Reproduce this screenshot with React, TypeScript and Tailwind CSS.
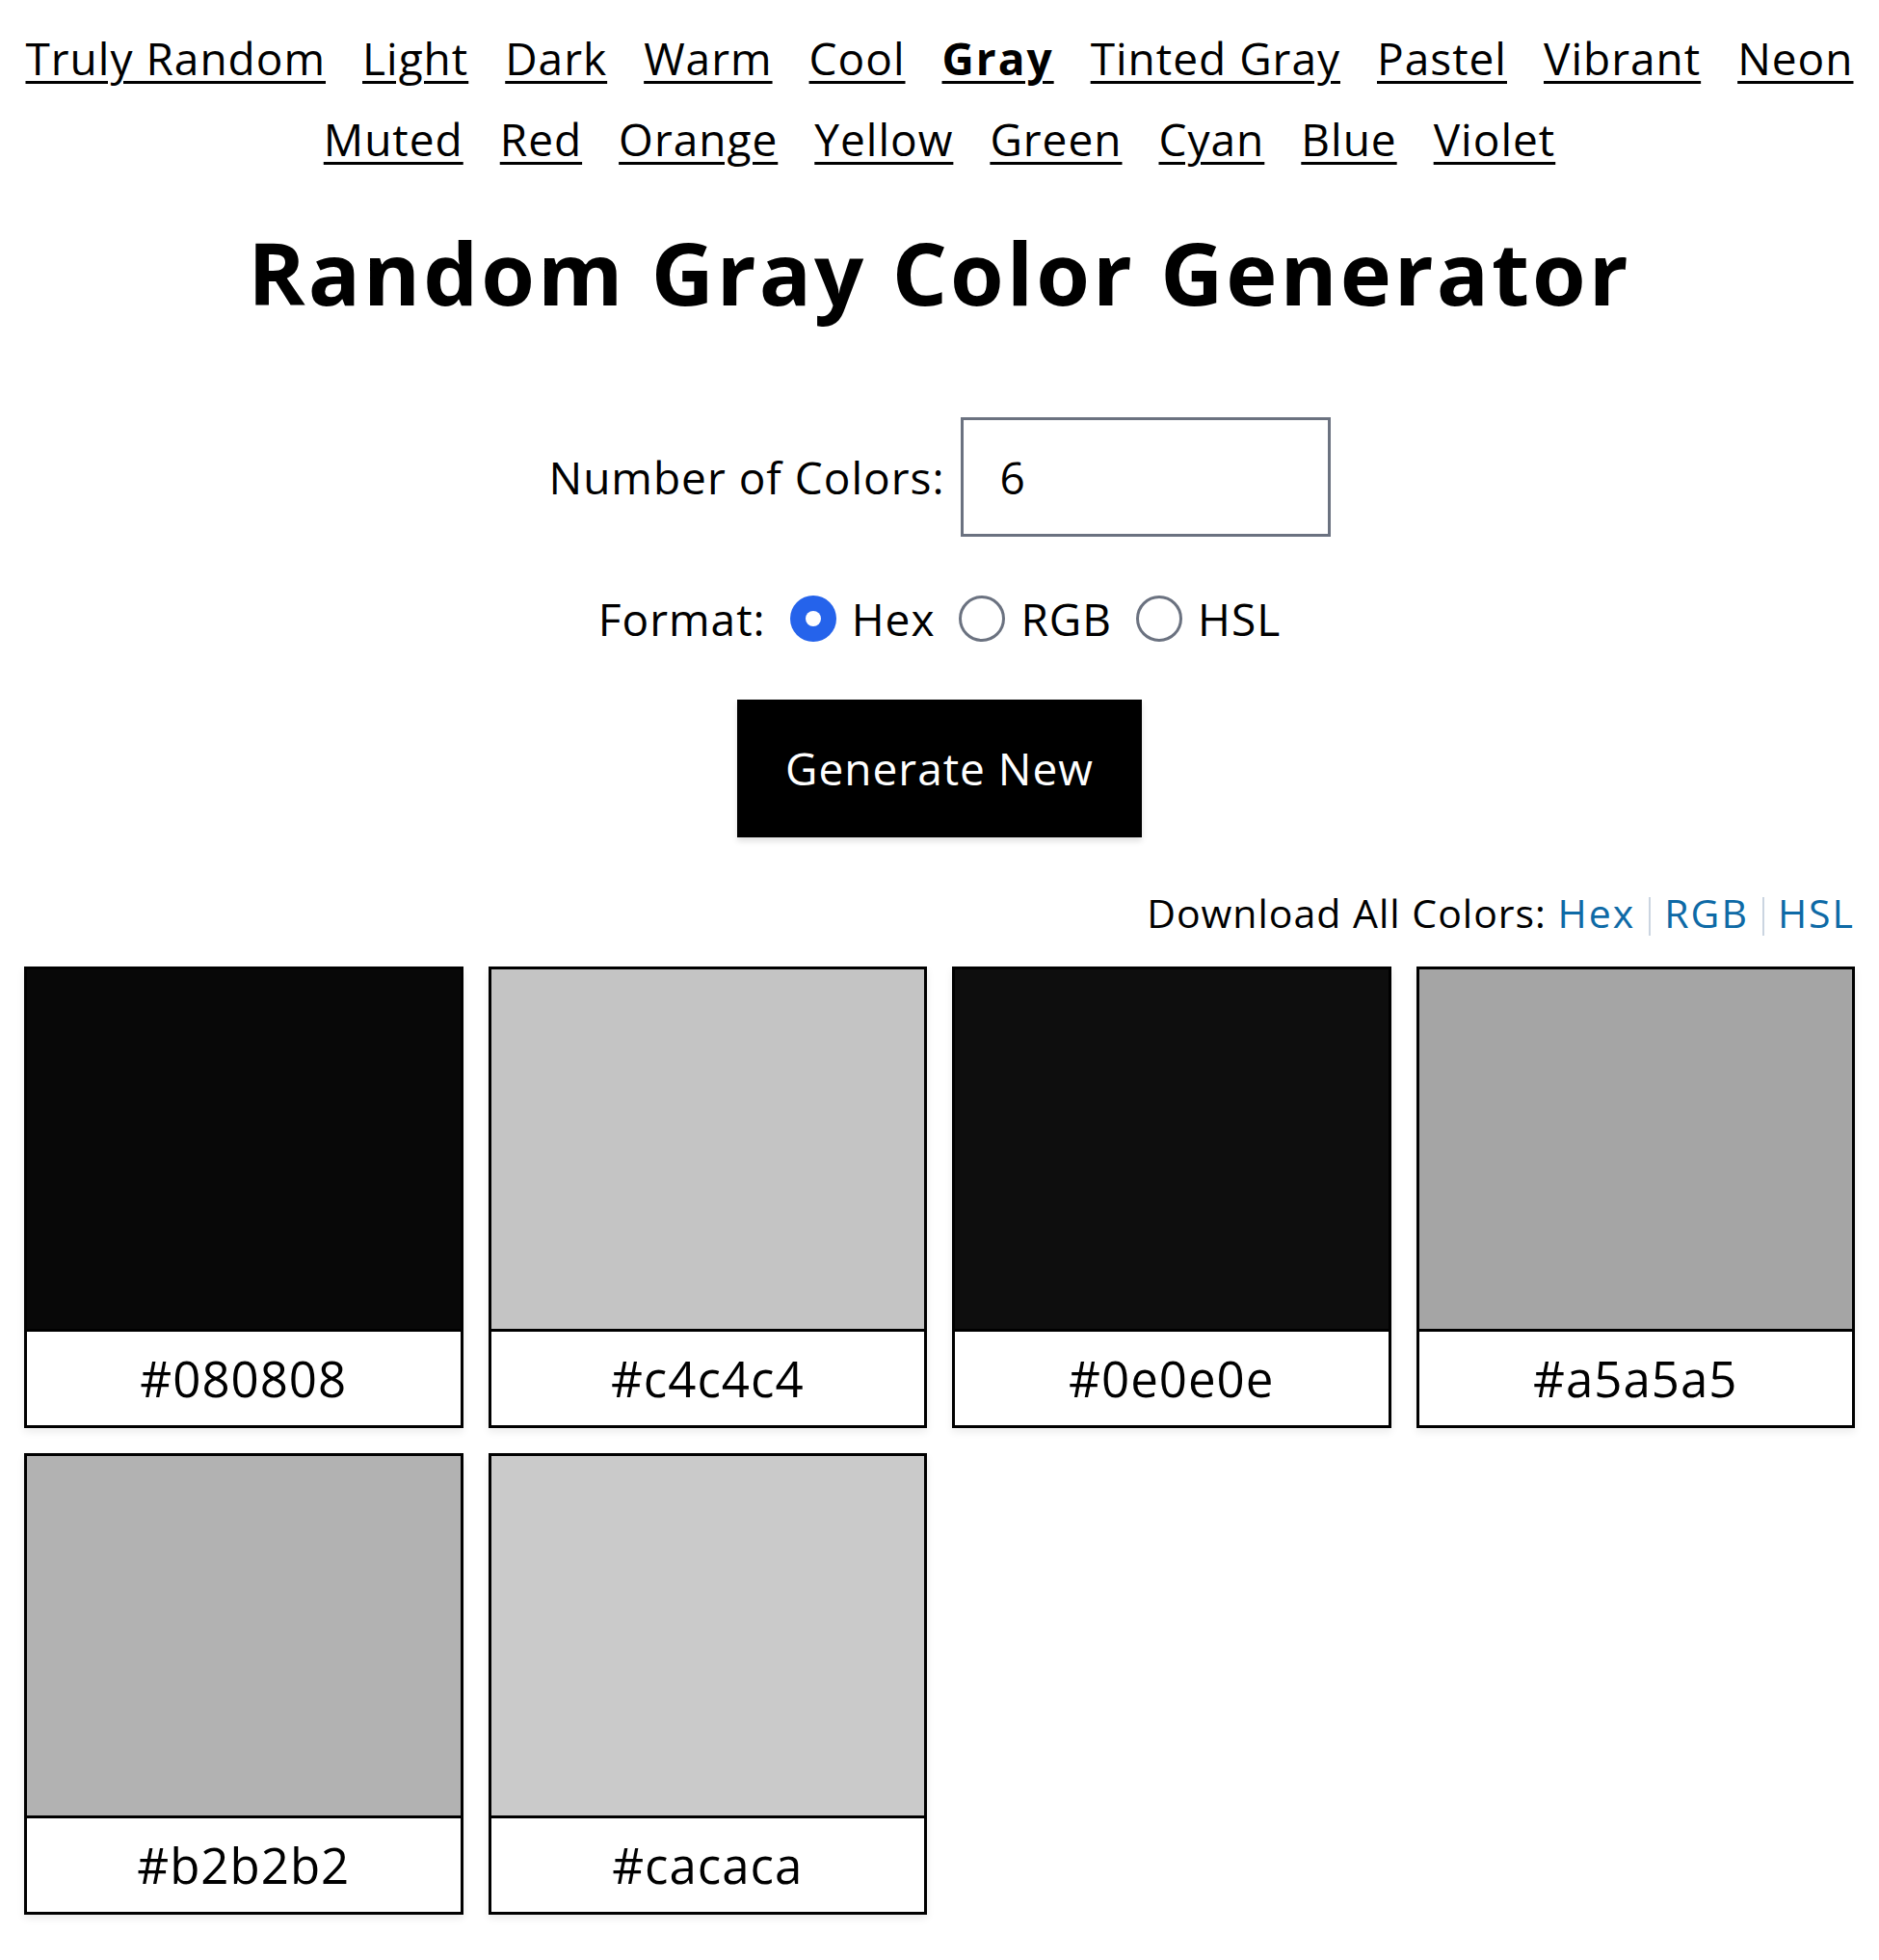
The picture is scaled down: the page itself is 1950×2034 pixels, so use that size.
import React from 'react'

const navLinks = [
  'Truly Random',
  'Light',
  'Dark',
  'Warm',
  'Cool',
  'Gray',
  'Tinted Gray',
  'Pastel',
  'Vibrant',
  'Neon',
  'Muted',
  'Red',
  'Orange',
  'Yellow',
  'Green',
  'Cyan',
  'Blue',
  'Violet',
]

const colors = ['#080808', '#c4c4c4', '#0e0e0e', '#a5a5a5', '#b2b2b2', '#cacaca']

function Radio({ checked, label }: { checked?: boolean; label: string }) {
  return (
    <label className="flex items-center gap-[16px]">
      {checked ? (
        <span className="w-[48px] h-[48px] rounded-full bg-[#2563eb] flex items-center justify-center">
          <span className="w-[16px] h-[16px] rounded-full bg-white" />
        </span>
      ) : (
        <span className="w-[48px] h-[48px] rounded-full border-[3px] border-[#6b7280] bg-white" />
      )}
      <span>{label}</span>
    </label>
  )
}

export default function App() {
  return (
    <div className="min-h-screen bg-white text-black font-['Open_Sans',sans-serif] tracking-[1px] px-[25px] pt-[18px] pb-[45px]">
      {/* Category nav */}
      <nav className="flex flex-wrap justify-center gap-x-[38px] text-[46px] leading-[84px]">
        {navLinks.map((name) => (
          <a
            key={name}
            href="#"
            className={
              'underline decoration-[3px] underline-offset-[6px] ' +
              (name === 'Gray' ? 'font-bold tracking-[2px]' : '')
            }
          >
            {name}
          </a>
        ))}
      </nav>

      <h1 className="mt-[42px] text-center text-[90px] leading-[108px] font-bold tracking-[3px]">
        Random Gray Color Generator
      </h1>

      {/* Controls */}
      <div className="mt-[97px] flex items-center justify-center gap-[16px] text-[46px]">
        <span>Number of Colors:</span>
        <input
          type="text"
          defaultValue="6"
          className="w-[384px] h-[124px] border-[3px] border-[#6b7280] pl-[38px] text-[46px] tracking-[1px] outline-none"
        />
      </div>

      <div className="mt-[61px] h-[48px] flex items-center justify-center gap-[25px] text-[46px]">
        <span>Format:</span>
        <Radio checked label="Hex" />
        <Radio label="RGB" />
        <Radio label="HSL" />
      </div>

      <div className="mt-[60px] flex justify-center">
        <button className="h-[143px] px-[50px] bg-black text-white text-[46px] tracking-[1px] shadow-[0_4px_6px_rgba(0,0,0,0.12)]">
          Generate New
        </button>
      </div>

      {/* Download links */}
      <div className="mt-[48px] text-right text-[41px] leading-[60px]">
        Download All Colors:{' '}
        <a href="#" className="text-[#0e6aa6] tracking-[2px]">Hex</a>
        <span className="inline-block align-[-8px] w-[2px] h-[40px] bg-[#cbd5e1] mx-[14px]" />
        <a href="#" className="text-[#0e6aa6] tracking-[2px]">RGB</a>
        <span className="inline-block align-[-8px] w-[2px] h-[40px] bg-[#cbd5e1] mx-[14px]" />
        <a href="#" className="text-[#0e6aa6] tracking-[2px]">HSL</a>
      </div>

      {/* Swatches */}
      <div className="mt-[26px] grid grid-cols-4 gap-x-[26px] gap-y-[26px]">
        {colors.map((c) => (
          <div
            key={c}
            className="border-[3px] border-black bg-white shadow-[0_4px_8px_rgba(0,0,0,0.08)]"
          >
            <div className="h-[376px] border-b-[3px] border-black" style={{ backgroundColor: c }} />
            <div className="h-[97px] flex items-center justify-center text-[51px]">{c}</div>
          </div>
        ))}
      </div>
    </div>
  )
}
